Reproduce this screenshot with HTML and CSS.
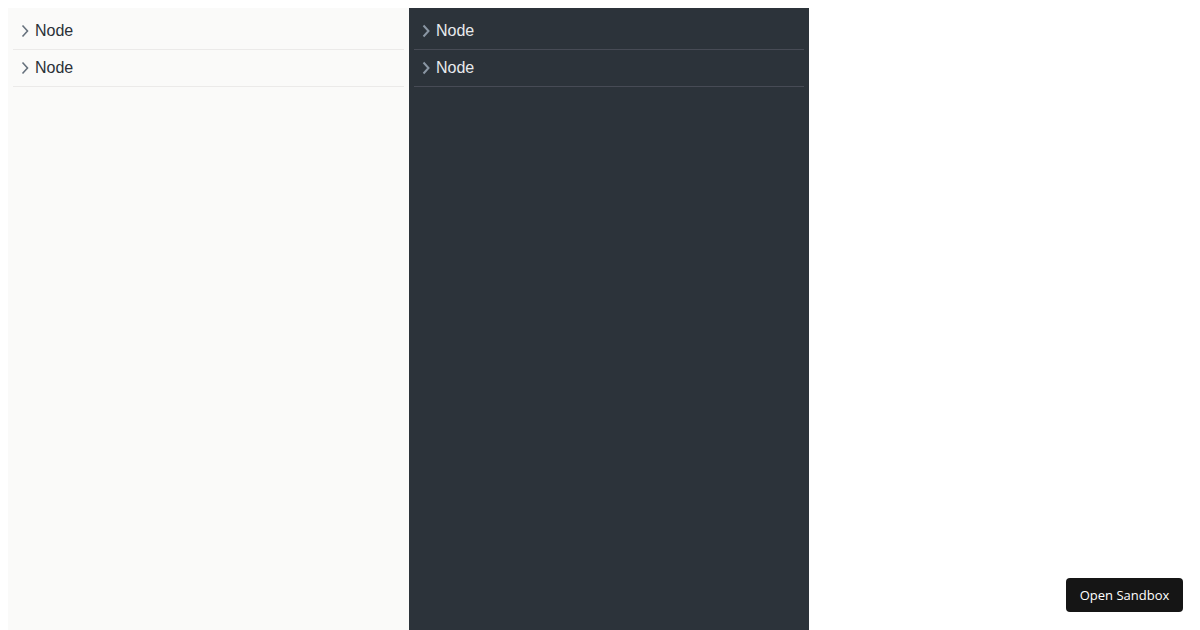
FILE: index.html
```html
<!DOCTYPE html>
<html>
<head>
<meta charset="utf-8">
<link rel="stylesheet" href="styles.css">
</head>
<body>
<div class="panes">
  <div class="pane light">
    <div class="row"><svg class="chev" viewBox="0 0 10 14"><path d="M2.5 1.5 L7.5 7 L2.5 12.5" /></svg><span>Node</span></div>
    <div class="row"><svg class="chev" viewBox="0 0 10 14"><path d="M2.5 1.5 L7.5 7 L2.5 12.5" /></svg><span>Node</span></div>
  </div>
  <div class="pane dark">
    <div class="row"><svg class="chev" viewBox="0 0 10 14"><path d="M2.5 1.5 L7.5 7 L2.5 12.5" /></svg><span>Node</span></div>
    <div class="row"><svg class="chev" viewBox="0 0 10 14"><path d="M2.5 1.5 L7.5 7 L2.5 12.5" /></svg><span>Node</span></div>
  </div>
</div>
<button class="sandbox">Open Sandbox</button>
</body>
</html>
```
FILE: styles.css
```css
html, body { background: #ffffff; }
body {
  margin: 8px;
  font-family: "Liberation Sans", Arial, sans-serif;
  overflow: hidden;
}
.panes {
  display: flex;
  height: 640px;
}
.pane {
  padding: 5px;
  box-sizing: border-box;
}
.light { width: 401px; background: #fafaf9; color: #2a3138; }
.dark { width: 400px; background: #2c333a; color: #e8eaed; }
.row {
  display: flex;
  align-items: center;
  height: 37px;
  box-sizing: border-box;
  border-bottom: 1px solid #ebeae9;
  padding-left: 7px;
  font-size: 16px;
}
.dark .row { border-bottom-color: #474b55; }
.chev {
  width: 10px;
  height: 14px;
  margin-right: 5px;
  fill: none;
  stroke: #66717d;
  stroke-width: 1.6;
}
.dark .chev { stroke: #8a96a3; stroke-width: 2; }
.sandbox {
  position: fixed;
  right: 17px;
  bottom: 18px;
  width: 117px;
  height: 34px;
  background: #151515;
  color: #ffffff;
  border: none;
  border-radius: 4px;
  font-family: "Open Sans", sans-serif;
  font-size: 13px;
  font-weight: 500;
  padding: 0;
}
```
